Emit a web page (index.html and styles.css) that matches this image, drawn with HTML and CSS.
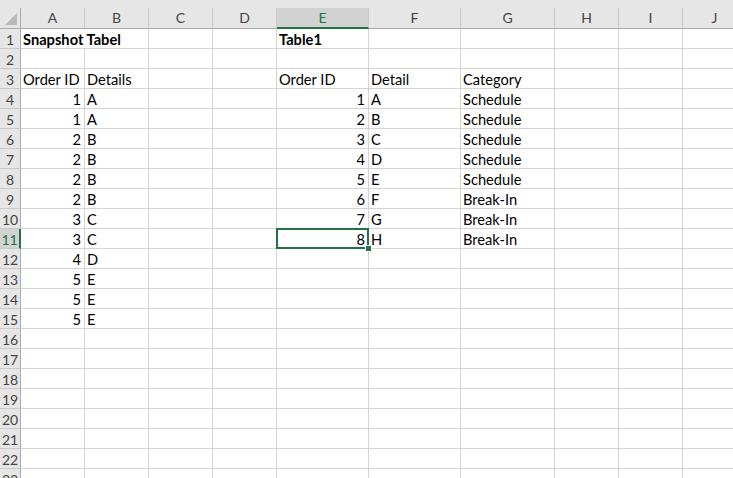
FILE: index.html
```html
<!DOCTYPE html>
<html>
<head>
<meta charset="utf-8">
<link rel="stylesheet" href="styles.css">
</head>
<body>
<div class="top"></div>
<div class="grid">
  <div class="h corner"><svg width="20" height="20" viewBox="0 0 20 20"><polygon points="17,5 17,17 5,17" fill="#b9b9b9"/></svg></div>
  <div class="h">A</div><div class="h">B</div><div class="h">C</div><div class="h">D</div><div class="h hsel">E</div><div class="h">F</div><div class="h">G</div><div class="h">H</div><div class="h">I</div><div class="h">J</div>

  <div class="rn">1</div><div class="c b span2">Snapshot Tabel</div><div class="c"></div><div class="c"></div><div class="c b">Table1</div><div class="c"></div><div class="c"></div><div class="c"></div><div class="c"></div><div class="c"></div>
  <div class="rn">2</div><div class="c"></div><div class="c"></div><div class="c"></div><div class="c"></div><div class="c"></div><div class="c"></div><div class="c"></div><div class="c"></div><div class="c"></div><div class="c"></div>
  <div class="rn">3</div><div class="c">Order ID</div><div class="c">Details</div><div class="c"></div><div class="c"></div><div class="c">Order ID</div><div class="c">Detail</div><div class="c">Category</div><div class="c"></div><div class="c"></div><div class="c"></div>
  <div class="rn">4</div><div class="c n">1</div><div class="c">A</div><div class="c"></div><div class="c"></div><div class="c n">1</div><div class="c">A</div><div class="c">Schedule</div><div class="c"></div><div class="c"></div><div class="c"></div>
  <div class="rn">5</div><div class="c n">1</div><div class="c">A</div><div class="c"></div><div class="c"></div><div class="c n">2</div><div class="c">B</div><div class="c">Schedule</div><div class="c"></div><div class="c"></div><div class="c"></div>
  <div class="rn">6</div><div class="c n">2</div><div class="c">B</div><div class="c"></div><div class="c"></div><div class="c n">3</div><div class="c">C</div><div class="c">Schedule</div><div class="c"></div><div class="c"></div><div class="c"></div>
  <div class="rn">7</div><div class="c n">2</div><div class="c">B</div><div class="c"></div><div class="c"></div><div class="c n">4</div><div class="c">D</div><div class="c">Schedule</div><div class="c"></div><div class="c"></div><div class="c"></div>
  <div class="rn">8</div><div class="c n">2</div><div class="c">B</div><div class="c"></div><div class="c"></div><div class="c n">5</div><div class="c">E</div><div class="c">Schedule</div><div class="c"></div><div class="c"></div><div class="c"></div>
  <div class="rn">9</div><div class="c n">2</div><div class="c">B</div><div class="c"></div><div class="c"></div><div class="c n">6</div><div class="c">F</div><div class="c">Break-In</div><div class="c"></div><div class="c"></div><div class="c"></div>
  <div class="rn">10</div><div class="c n">3</div><div class="c">C</div><div class="c"></div><div class="c"></div><div class="c n">7</div><div class="c">G</div><div class="c">Break-In</div><div class="c"></div><div class="c"></div><div class="c"></div>
  <div class="rn rsel">11</div><div class="c n">3</div><div class="c">C</div><div class="c"></div><div class="c"></div><div class="c n sel">8<span class="handle"></span></div><div class="c">H</div><div class="c">Break-In</div><div class="c"></div><div class="c"></div><div class="c"></div>
  <div class="rn">12</div><div class="c n">4</div><div class="c">D</div><div class="c"></div><div class="c"></div><div class="c"></div><div class="c"></div><div class="c"></div><div class="c"></div><div class="c"></div><div class="c"></div>
  <div class="rn">13</div><div class="c n">5</div><div class="c">E</div><div class="c"></div><div class="c"></div><div class="c"></div><div class="c"></div><div class="c"></div><div class="c"></div><div class="c"></div><div class="c"></div>
  <div class="rn">14</div><div class="c n">5</div><div class="c">E</div><div class="c"></div><div class="c"></div><div class="c"></div><div class="c"></div><div class="c"></div><div class="c"></div><div class="c"></div><div class="c"></div>
  <div class="rn">15</div><div class="c n">5</div><div class="c">E</div><div class="c"></div><div class="c"></div><div class="c"></div><div class="c"></div><div class="c"></div><div class="c"></div><div class="c"></div><div class="c"></div>
  <div class="rn">16</div><div class="c"></div><div class="c"></div><div class="c"></div><div class="c"></div><div class="c"></div><div class="c"></div><div class="c"></div><div class="c"></div><div class="c"></div><div class="c"></div>
  <div class="rn">17</div><div class="c"></div><div class="c"></div><div class="c"></div><div class="c"></div><div class="c"></div><div class="c"></div><div class="c"></div><div class="c"></div><div class="c"></div><div class="c"></div>
  <div class="rn">18</div><div class="c"></div><div class="c"></div><div class="c"></div><div class="c"></div><div class="c"></div><div class="c"></div><div class="c"></div><div class="c"></div><div class="c"></div><div class="c"></div>
  <div class="rn">19</div><div class="c"></div><div class="c"></div><div class="c"></div><div class="c"></div><div class="c"></div><div class="c"></div><div class="c"></div><div class="c"></div><div class="c"></div><div class="c"></div>
  <div class="rn">20</div><div class="c"></div><div class="c"></div><div class="c"></div><div class="c"></div><div class="c"></div><div class="c"></div><div class="c"></div><div class="c"></div><div class="c"></div><div class="c"></div>
  <div class="rn">21</div><div class="c"></div><div class="c"></div><div class="c"></div><div class="c"></div><div class="c"></div><div class="c"></div><div class="c"></div><div class="c"></div><div class="c"></div><div class="c"></div>
  <div class="rn">22</div><div class="c"></div><div class="c"></div><div class="c"></div><div class="c"></div><div class="c"></div><div class="c"></div><div class="c"></div><div class="c"></div><div class="c"></div><div class="c"></div>
  <div class="rn">23</div><div class="c"></div><div class="c"></div><div class="c"></div><div class="c"></div><div class="c"></div><div class="c"></div><div class="c"></div><div class="c"></div><div class="c"></div><div class="c"></div>
</div>
</body>
</html>
```

FILE: styles.css
```css
html, body {
  margin: 0;
  padding: 0;
  background: #ffffff;
  overflow: hidden;
}
body {
  width: 733px;
  height: 478px;
  font-family: Lato, "Liberation Sans", sans-serif;
  color: #000;
}
.top {
  height: 8px;
  background: #e6e6e6;
}
.grid {
  display: grid;
  grid-template-columns: 21px 64px 64px 64px 64px 92px 92px 94px 64px 64px 64px;
  grid-template-rows: 21px;
  grid-auto-rows: 20px;
}
.grid > div {
  box-sizing: border-box;
}
.h {
  background: #e6e6e6;
  border-right: 1px solid #c9c9c9;
  border-bottom: 1px solid #ababab;
  text-align: center;
  color: #444;
  font-size: 14px;
  line-height: 20px;
}
.corner {
  border-right: 1px solid #ababab;
  position: relative;
}
.corner svg {
  display: block;
}
.hsel {
  background: #d2d2d2;
  color: #217346;
  border-bottom: 2px solid #217346;
}
.rn {
  background: #e6e6e6;
  border-right: 1px solid #ababab;
  border-bottom: 1px solid #c9c9c9;
  text-align: center;
  color: #444;
  font-size: 14px;
  line-height: 19px;
  padding-top: 1px;
}
.rsel {
  background: #d2d2d2;
  color: #217346;
  border-right: 2px solid #217346;
}
.c {
  border-right: 1px solid #d4d4d4;
  border-bottom: 1px solid #d4d4d4;
  padding: 1px 3px 0 2px;
  font-size: 14.67px;
  line-height: 19px;
  white-space: nowrap;
  overflow: hidden;
}
.span2 {
  grid-column: span 2;
}
.n {
  text-align: right;
}
.b {
  font-weight: bold;
}
.sel {
  position: relative;
  overflow: visible;
}
.sel::before {
  content: "";
  position: absolute;
  left: -1px;
  top: -1px;
  right: -1px;
  bottom: -1px;
  border: 2px solid #217346;
}
.handle {
  position: absolute;
  right: -3px;
  bottom: -3px;
  width: 5px;
  height: 5px;
  background: #217346;
  box-shadow: 0 0 0 1px #fff;
}
```
